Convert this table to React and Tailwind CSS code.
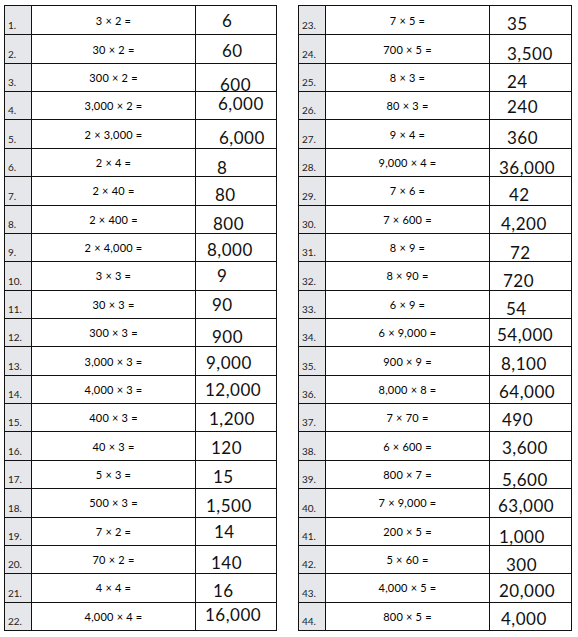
import React from "react";

const leftRows = [
  ["1.", "3 × 2 =", "6", "pl-[26px] pt-[6px]"],
  ["2.", "30 × 2 =", "60", "pl-[26px] pt-[7px]"],
  ["3.", "300 × 2 =", "600", "pl-[24px] pt-[12px]"],
  ["4.", "3,000 × 2 =", "6,000", "pl-[22px] pt-[3px]"],
  ["5.", "2 × 3,000 =", "6,000", "pl-[23px] pt-[9px]"],
  ["6.", "2 × 4 =", "8", "pl-[21px] pt-[10px]"],
  ["7.", "2 × 40 =", "80", "pl-[19px] pt-[9px]"],
  ["8.", "2 × 400 =", "800", "pl-[17px] pt-[9px]"],
  ["9.", "2 × 4,000 =", "8,000", "pl-[11px] pt-[7px]"],
  ["10.", "3 × 3 =", "9", "pl-[21px] pt-[5px]"],
  ["11.", "30 × 3 =", "90", "pl-[16px] pt-[5px]"],
  ["12.", "300 × 3 =", "900", "pl-[16px] pt-[9px]"],
  ["13.", "3,000 × 3 =", "9,000", "pl-[10px] pt-[7px]"],
  ["14.", "4,000 × 3 =", "12,000", "pl-[9px] pt-[5px]"],
  ["15.", "400 × 3 =", "1,200", "pl-[13px] pt-[6px]"],
  ["16.", "40 × 3 =", "120", "pl-[15px] pt-[7px]"],
  ["17.", "5 × 3 =", "15", "pl-[17px] pt-[7px]"],
  ["18.", "500 × 3 =", "1,500", "pl-[10px] pt-[8px]"],
  ["19.", "7 × 2 =", "14", "pl-[18px] pt-[5px]"],
  ["20.", "70 × 2 =", "140", "pl-[15px] pt-[8px]"],
  ["21.", "4 × 4 =", "16", "pl-[17px] pt-[8px]"],
  ["22.", "4,000 × 4 =", "16,000", "pl-[9px] pt-[3px]"],
];

const rightRows = [
  ["23.", "7 × 5 =", "35", "pl-[17px] pt-[9px]"],
  ["24.", "700 × 5 =", "3,500", "pl-[17px] pt-[10px]"],
  ["25.", "8 × 3 =", "24", "pl-[17px] pt-[9px]"],
  ["26.", "80 × 3 =", "240", "pl-[17px] pt-[6px]"],
  ["27.", "9 × 4 =", "360", "pl-[17px] pt-[9px]"],
  ["28.", "9,000 × 4 =", "36,000", "pl-[9px] pt-[10px]"],
  ["29.", "7 × 6 =", "42", "pl-[19px] pt-[9px]"],
  ["30.", "7 × 600 =", "4,200", "pl-[11px] pt-[9px]"],
  ["31.", "8 × 9 =", "72", "pl-[20px] pt-[10px]"],
  ["32.", "8 × 90 =", "720", "pl-[13px] pt-[10px]"],
  ["33.", "6 × 9 =", "54", "pl-[16px] pt-[9px]"],
  ["34.", "6 × 9,000 =", "54,000", "pl-[7px] pt-[7px]"],
  ["35.", "900 × 9 =", "8,100", "pl-[11px] pt-[8px]"],
  ["36.", "8,000 × 8 =", "64,000", "pl-[9px] pt-[7px]"],
  ["37.", "7 × 70 =", "490", "pl-[12px] pt-[7px]"],
  ["38.", "6 × 600 =", "3,600", "pl-[12px] pt-[7px]"],
  ["39.", "800 × 7 =", "5,600", "pl-[12px] pt-[10px]"],
  ["40.", "7 × 9,000 =", "63,000", "pl-[8px] pt-[8px]"],
  ["41.", "200 × 5 =", "1,000", "pl-[9px] pt-[10px]"],
  ["42.", "5 × 60 =", "300", "pl-[16px] pt-[10px]"],
  ["43.", "4,000 × 5 =", "20,000", "pl-[9px] pt-[8px]"],
  ["44.", "800 × 5 =", "4,000", "pl-[11px] pt-[7px]"],
];

const Sheet = ({ rows, width }) => (
  <div
    className={`grid grid-rows-[repeat(22,minmax(0,1fr))] h-[626px] border border-[#111] ${width}`}
  >
    {rows.map(([num, expr, ans, pos]) => (
      <div key={num} className="flex border-t border-[#111] first:border-t-0 min-h-0">
        <div className="w-[26px] shrink-0 bg-[#e6e7eb] flex items-end pl-[3px] pb-[4px] text-[10px] leading-none text-[#222]">
          {num}
        </div>
        <div className="w-[164px] shrink-0 border-l border-[#111] flex items-center justify-center text-[11px] leading-none text-black tracking-[0.2px] whitespace-nowrap">
          {expr}
        </div>
        <div className="flex-1 border-l border-[#111] min-w-0">
          <div className={`text-[17px] leading-none tracking-[0.5px] text-[#111] whitespace-nowrap ${pos}`}>
            {ans}
          </div>
        </div>
      </div>
    ))}
  </div>
);

export default function App() {
  return (
    <div className="w-[578px] h-[637px] bg-white font-[Lato,'Open_Sans',sans-serif] pt-[5px] pl-[4px] flex gap-[21px]">
      <Sheet rows={leftRows} width="w-[273px]" />
      <Sheet rows={rightRows} width="w-[274px]" />
    </div>
  );
}
